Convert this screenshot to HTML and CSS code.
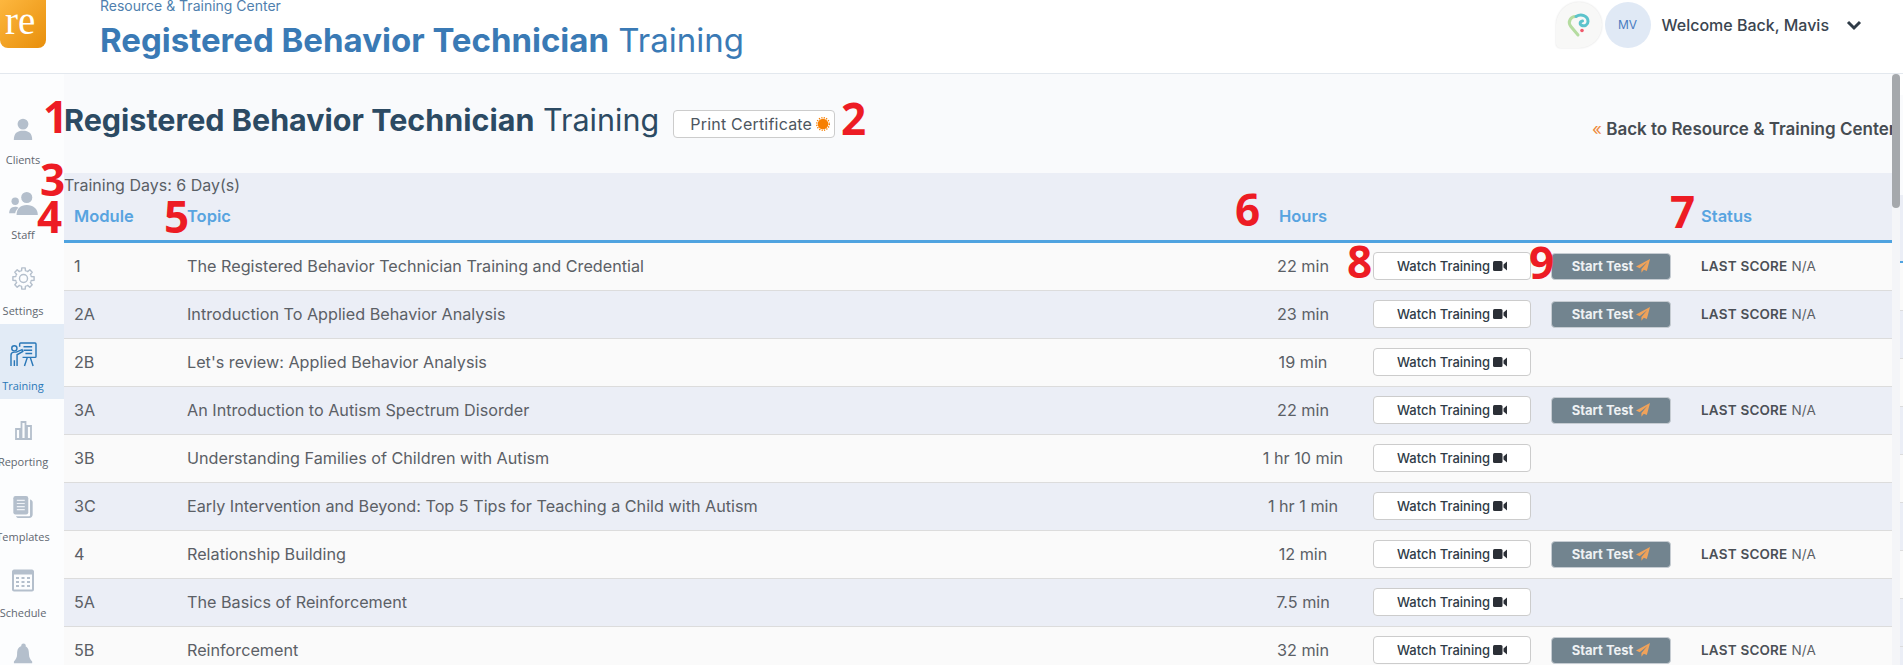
FILE: index.html
```html
<!DOCTYPE html>
<html lang="en">
<head>
    <meta charset="UTF-8">
    <title>Registered Behavior Technician Training</title>
    <link rel="stylesheet" href="styles.css">
</head>
<body>
<svg class="defs" width="0" height="0">
    <symbol id="cam" viewBox="0 0 14 10"><rect x="0" y="0" width="9.5" height="10" rx="1.5"/><path d="M10.5 3.6 14 .6v8.8l-3.5-3z"/></symbol>
    <symbol id="plane" viewBox="0 0 16 16"><path d="M16 0 0 8.6l4.2 1.9L13 3.4 6.2 11.4v4.2l2.7-3.4 3.5 1.6z"/></symbol>
    <path id="tooth" d="M8.79 4.24 9.97 3.85 10.25 .94H13.75L14.03 3.85 15.21 4.24"/>
</svg>
<header class="topbar">
    <div class="logo">re</div>
    <div class="head-titles">
        <div class="head-sub">Resource &amp; Training Center</div>
        <h1 class="head-title"><b>Registered Behavior Technician</b> Training</h1>
    </div>
    <div class="user">
        <div class="bubble">
            <svg width="26" height="26" viewBox="0 0 26 26" fill="none" stroke-width="3" stroke-linecap="round">
                <path d="M12 23 4.500 14C1.500 9.500 5 4 10 4.500" stroke="#b5dca0"/>
                <path d="M10 4.500C15 1.500 22 3.500 22 9.500c0 3.500-3.500 5-6 4-2.500-1-2.500-4 .5-4.500" stroke="#5cc3cc"/>
                <circle cx="16" cy="18.500" r="1.800" fill="#f0596b" stroke="none"/>
            </svg>
        </div>
        <div class="avatar">MV</div>
        <div class="welcome">Welcome Back, Mavis</div>
        <svg class="chev" width="16" height="11" viewBox="0 0 16 11" fill="none" stroke="#2f3b47" stroke-width="3"><path d="M2 2l6 6 6-6"/></svg>
    </div>
</header>
<div class="layout">
    <nav class="sidebar">
        <a class="nav-item">
            <svg width="20" height="23" viewBox="0 0 24 27"><circle cx="12" cy="7" r="6.500"/><path d="M1 26c0-8 4-11 11-11s11 3 11 11z"/></svg>
            <span>Clients</span>
        </a>
        <a class="nav-item">
            <svg width="29" height="24" viewBox="0 0 31 26"><circle cx="19" cy="6" r="6"/><circle cx="6.500" cy="10" r="4"/><path d="M8 25c0-7 4-11 11-11s12 4 12 11z"/><path d="M0 23c0-4 2-7 6.500-7 1.500 0 2.500.3 3.500 1-2 2-3.200 3.700-3.500 6z"/></svg>
            <span>Staff</span>
        </a>
        <a class="nav-item">
            <svg class="line up" width="23" height="23" viewBox="0 0 24 24" stroke="#b4bfcc" stroke-width="1.500" stroke-linejoin="round">
                <circle cx="12" cy="12" r="4.200"/>
                <use href="#tooth"/>
                <use href="#tooth" transform="rotate(45 12 12)"/>
                <use href="#tooth" transform="rotate(90 12 12)"/>
                <use href="#tooth" transform="rotate(135 12 12)"/>
                <use href="#tooth" transform="rotate(180 12 12)"/>
                <use href="#tooth" transform="rotate(225 12 12)"/>
                <use href="#tooth" transform="rotate(270 12 12)"/>
                <use href="#tooth" transform="rotate(315 12 12)"/>
            </svg>
            <span>Settings</span>
        </a>
        <a class="nav-item active">
            <svg class="line" width="29" height="25" viewBox="0 0 30 26" stroke="#2a78b8" stroke-width="1.500"><circle cx="5.500" cy="6.500" r="2.700"/><path d="M2 25V13.500c0-2 1.500-3 3.500-3h2l6-2.500.8 1.800-6 3.500V25M5.500 19v6"/><path d="M11 5V2c0-.6.400-1 1-1h15c.6 0 1 .4 1 1v13c0 .6-.4 1-1 1H14"/><path d="M15 5h9M15 8.500h9M17 12h7M19 16l-3 9M22 16l3 9"/></svg>
            <span>Training</span>
        </a>
        <a class="nav-item">
            <svg class="line up-more" width="17" height="19" viewBox="0 0 17 19" stroke="#b4bfcc" stroke-width="1.800"><path d="M1 8h4v10H1zM6.500 1h4v17h-4zM12 5h4v13h-4z"/></svg>
            <span>Reporting</span>
        </a>
        <a class="nav-item">
            <svg width="20" height="22" viewBox="0 0 22 25"><rect x="0" y="0" width="17" height="21" rx="2.500"/><path d="M19 4c1.500.300 3 1.500 3 3v14c0 2-1.500 4-4 4H6c-1.500 0-2.500-.7-3-2h15c.7 0 1-.3 1-1z"/><path d="M4 5h9M4 8.500h9M4 12h9M4 15.500h9" stroke="#eef1f6" stroke-width="1.300"/></svg>
            <span>Templates</span>
        </a>
        <a class="nav-item">
            <svg class="up" width="22" height="23" viewBox="0 0 22 22"><path d="M2 0h18c1 0 2 1 2 2v18c0 1-1 2-2 2H2c-1 0-2-1-2-2V2C0 1 1 0 2 0zm0 5v15h18V5z"/><path d="M4 7.500h3v2H4zM9.500 7.500h3v2h-3zM15 7.500h3v2h-3zM4 11.500h3v2H4zM9.500 11.500h3v2h-3zM15 11.500h3v2h-3zM4 15.500h3v2H4zM9.500 15.500h3v2h-3zM15 15.500h3v2h-3z"/></svg>
            <span>Schedule</span>
        </a>
        <a class="nav-item bell">
            <svg width="21" height="24" viewBox="0 0 23 26"><circle cx="11.500" cy="3" r="2.500"/><path d="M11.500 3C6 3 4.500 7 4.500 12c0 4-1.500 6-3.500 8v2h20v-2c-2-2-3.500-4-3.500-8 0-5-1.500-9-6.500-9z"/></svg>
        </a>
    </nav>
    <main class="content">
        <section class="page-head">
            <h2 class="page-title"><b>Registered Behavior Technician</b> Training</h2>
            <button class="print-btn">Print Certificate
                <svg width="14" height="14" viewBox="0 0 14 14"><circle cx="7" cy="7" r="5.300" fill="#f77f00"/><circle cx="7" cy="7" r="6.300" fill="none" stroke="#f77f00" stroke-width="1.400" stroke-dasharray="1.200 1.270"/></svg>
            </button>
            <a class="back-link"><i>«</i> Back to Resource &amp; Training Center</a>
        </section>
        <section class="list">
            <div class="days">Training Days: 6 Day(s)</div>
            <table class="modules">
                <thead>
                    <tr>
                        <th class="c-mod">Module</th>
                        <th class="c-topic">Topic</th>
                        <th class="c-hours">Hours</th>
                        <th class="c-watch"></th>
                        <th class="c-test"></th>
                        <th class="c-status">Status</th>
                    </tr>
                </thead>
                <tbody>
                    <tr>
                        <td>1</td><td>The Registered Behavior Technician Training and Credential</td><td class="hrs">22 min</td>
                        <td><button class="watch">Watch Training <svg width="14" height="10"><use href="#cam"/></svg></button></td>
                        <td><button class="test">Start Test <svg width="14" height="14"><use href="#plane"/></svg></button></td>
                        <td class="score"><b>LAST SCORE</b> N/A</td>
                    </tr>
                    <tr>
                        <td>2A</td><td>Introduction To Applied Behavior Analysis</td><td class="hrs">23 min</td>
                        <td><button class="watch">Watch Training <svg width="14" height="10"><use href="#cam"/></svg></button></td>
                        <td><button class="test">Start Test <svg width="14" height="14"><use href="#plane"/></svg></button></td>
                        <td class="score"><b>LAST SCORE</b> N/A</td>
                    </tr>
                    <tr>
                        <td>2B</td><td>Let's review: Applied Behavior Analysis</td><td class="hrs">19 min</td>
                        <td><button class="watch">Watch Training <svg width="14" height="10"><use href="#cam"/></svg></button></td>
                        <td></td><td></td>
                    </tr>
                    <tr>
                        <td>3A</td><td>An Introduction to Autism Spectrum Disorder</td><td class="hrs">22 min</td>
                        <td><button class="watch">Watch Training <svg width="14" height="10"><use href="#cam"/></svg></button></td>
                        <td><button class="test">Start Test <svg width="14" height="14"><use href="#plane"/></svg></button></td>
                        <td class="score"><b>LAST SCORE</b> N/A</td>
                    </tr>
                    <tr>
                        <td>3B</td><td>Understanding Families of Children with Autism</td><td class="hrs">1 hr 10 min</td>
                        <td><button class="watch">Watch Training <svg width="14" height="10"><use href="#cam"/></svg></button></td>
                        <td></td><td></td>
                    </tr>
                    <tr>
                        <td>3C</td><td>Early Intervention and Beyond: Top 5 Tips for Teaching a Child with Autism</td><td class="hrs">1 hr 1 min</td>
                        <td><button class="watch">Watch Training <svg width="14" height="10"><use href="#cam"/></svg></button></td>
                        <td></td><td></td>
                    </tr>
                    <tr>
                        <td>4</td><td>Relationship Building</td><td class="hrs">12 min</td>
                        <td><button class="watch">Watch Training <svg width="14" height="10"><use href="#cam"/></svg></button></td>
                        <td><button class="test">Start Test <svg width="14" height="14"><use href="#plane"/></svg></button></td>
                        <td class="score"><b>LAST SCORE</b> N/A</td>
                    </tr>
                    <tr>
                        <td>5A</td><td>The Basics of Reinforcement</td><td class="hrs">7.5 min</td>
                        <td><button class="watch">Watch Training <svg width="14" height="10"><use href="#cam"/></svg></button></td>
                        <td></td><td></td>
                    </tr>
                    <tr>
                        <td>5B</td><td>Reinforcement</td><td class="hrs">32 min</td>
                        <td><button class="watch">Watch Training <svg width="14" height="10"><use href="#cam"/></svg></button></td>
                        <td><button class="test">Start Test <svg width="14" height="14"><use href="#plane"/></svg></button></td>
                        <td class="score"><b>LAST SCORE</b> N/A</td>
                    </tr>
                </tbody>
            </table>
        </section>
    </main>
    <div class="scrollbar"><div class="thumb"></div></div>
    <div class="strip">
        <div class="strip-top"></div>
        <div class="strip-head"></div>
        <div class="strip-row"></div>
        <div class="strip-row even"></div>
        <div class="strip-row"></div>
        <div class="strip-row even"></div>
        <div class="strip-row"></div>
        <div class="strip-row even"></div>
        <div class="strip-row"></div>
        <div class="strip-row even"></div>
    </div>
</div>
<!-- red callout numbers drawn over the screenshot -->
<span class="mark m1">1</span>
<span class="mark m2">2</span>
<span class="mark m3">3</span>
<span class="mark m4">4</span>
<span class="mark m5">5</span>
<span class="mark m6">6</span>
<span class="mark m7">7</span>
<span class="mark m8">8</span>
<span class="mark m9">9</span>
</body>
</html>
```

FILE: styles.css
```css
*{
    margin: 0;
    padding: 0;
    box-sizing: border-box;
}
html,body{
    width: 100%;
    height: 100%;
    overflow: hidden;
}
body{
    position: relative;
    background-color: #fff;
    font-family: Inter, "Open Sans", sans-serif;
    color: #555;
}
.defs{
    position: absolute;
}
button{
    font-family: inherit;
}

/* top bar */
.topbar{
    height: 74px;
    display: flex;
    border-bottom: 1px solid #e3e8ee;
    background-color: #fff;
}
.logo{
    width: 46px;
    height: 48px;
    margin-right: 54px;
    padding: 0 0 0 5px;
    border-radius: 0 0 8px 8px;
    background: linear-gradient(135deg, #fdb73f, #e88f0b);
    color: #fff;
    font-family: "Liberation Serif", serif;
    font-size: 39px;
    line-height: 42px;
}
.head-sub{
    font-size: 14px;
    line-height: 12px;
    color: #4f7fae;
}
.head-title{
    margin-top: 8px;
    font-size: 33px;
    line-height: 40px;
    font-weight: 400;
    color: #3a7ab5;
    white-space: nowrap;
}
.head-title b,.page-title b{
    font-weight: 700;
}
.user{
    margin-left: auto;
    margin-right: 41px;
    height: 50px;
    display: flex;
    align-items: center;
    padding-left: 2px;
}
.bubble{
    width: 46px;
    height: 46px;
    margin-right: 3px;
    border-radius: 50% 50% 50% 10%;
    background-color: #f8f8f7;
    box-shadow: 0 0 2px #ddd;
    display: flex;
    align-items: center;
    justify-content: center;
}
.avatar{
    width: 46px;
    height: 46px;
    border-radius: 50%;
    background-color: #e0e9f5;
    color: #4a7cc0;
    font-size: 12px;
    line-height: 46px;
    text-align: center;
}
.welcome{
    margin-left: 11px;
    font-size: 16px;
    font-weight: 500;
    color: #3a4550;
    white-space: nowrap;
}
.chev{
    margin-left: 17px;
}

/* page body */
.layout{
    display: flex;
    height: 591px;
}
.sidebar{
    width: 64px;
    flex: none;
    padding-top: 23px;
    background-color: #fcfdfe;
    overflow: hidden;
}
.nav-item{
    height: 75.500px;
    display: flex;
    flex-direction: column;
    align-items: center;
    justify-content: flex-end;
    padding-right: 18px;
    padding-bottom: 5px;
    font-family: "Open Sans", sans-serif;
    font-size: 11px;
    line-height: 17px;
    color: #5f6770;
    white-space: nowrap;
}
.nav-item svg{
    fill: #b4bfcc;
    margin-bottom: 10px;
}
.nav-item svg.line{
    fill: none;
}
.nav-item svg.up{
    margin-bottom: 12px;
}
.nav-item svg.up-more{
    margin-bottom: 13px;
}
.nav-item.active{
    background-color: #e2ebf6;
    color: #2a78b8;
}
.nav-item.bell{
    justify-content: flex-start;
    padding-top: 17px;
}
.content{
    width: 1828px;
    flex: none;
    overflow: hidden;
}
.page-head{
    height: 99px;
    display: flex;
    align-items: flex-start;
    background-color: #f9fafc;
    white-space: nowrap;
}
.page-title{
    margin-top: 28px;
    font-size: 30.500px;
    line-height: 36px;
    font-weight: 400;
    color: #2c4a63;
}
.print-btn{
    width: 162px;
    height: 28px;
    margin: 36px 0 0 14px;
    border: 1px solid #ccc;
    border-radius: 4px;
    background-color: #fff;
    color: #4d5660;
    font-size: 16px;
    letter-spacing: .2px;
    display: flex;
    align-items: center;
    justify-content: flex-end;
    gap: 4px;
    padding-right: 4px;
}
.back-link{
    margin: 45px 0 0 auto;
    width: 300px;
    font-size: 17px;
    line-height: 20px;
    font-weight: 600;
    color: #464c52;
    overflow: hidden;
}
.back-link i{
    font-style: normal;
    font-weight: 400;
    color: #ee8a3c;
}
.list{
    background-color: #ebeef6;
}
.days{
    height: 19px;
    padding-top: 3px;
    font-size: 16px;
    line-height: 18px;
    color: #5a5f66;
}
.modules{
    width: 100%;
    table-layout: fixed;
    border-collapse: collapse;
}
.modules th{
    height: 49px;
    padding-top: 1px;
    text-align: left;
    font-size: 16.500px;
    font-weight: 600;
    color: #58a4e0;
    border-bottom: 3px solid #4fa3e0;
}
.c-mod{
    width: 123px;
    padding-left: 10px;
}
.c-topic{
    width: 1062px;
}
.c-hours{
    width: 124px;
}
.modules .c-hours{
    text-align: center;
    padding-right: 16px;
}
.c-watch{
    width: 178px;
}
.c-test{
    width: 150px;
}
.modules td{
    height: 48px;
    font-size: 16.200px;
    color: #5b6066;
    border-bottom: 1px solid #dcdcdc;
    white-space: nowrap;
}
.modules tbody tr:first-child td{
    height: 49px;
}
.modules td:first-child{
    padding-left: 10px;
}
.modules tbody tr:nth-child(odd){
    background-color: #fafafa;
}
.modules .hrs{
    text-align: center;
    padding-right: 16px;
}
.watch{
    width: 158px;
    height: 28px;
    display: flex;
    align-items: center;
    justify-content: center;
    gap: 3px;
    border: 1px solid #ccc;
    border-radius: 4px;
    background-color: #fff;
    color: #2f3b47;
    font-size: 13px;
    font-weight: 500;
}
.watch svg{
    fill: #2b2f36;
}
.test{
    width: 120px;
    height: 27px;
    display: flex;
    align-items: center;
    justify-content: center;
    gap: 3px;
    border: 1px solid #c6ccd2;
    border-radius: 4px;
    background-color: #72848f;
    color: #eef1f3;
    font-size: 13px;
    font-weight: 700;
}
.test svg{
    fill: #f0a25a;
}
.modules .score{
    font-size: 13.500px;
    letter-spacing: .2px;
    color: #5b6066;
}
.score b{
    font-weight: 600;
    color: #4b5056;
}
.scrollbar{
    width: 8px;
    flex: none;
    background-color: #f4f5f8;
}
.thumb{
    height: 134px;
    border-radius: 4px;
    background-color: #a5a8ac;
}
.strip{
    width: 3px;
    flex: none;
    background-color: #ebeef6;
}
.strip-top{
    height: 121px;
    background-color: #fafbfd;
    border-top: 21px solid #fff;
}
.strip-head{
    height: 68px;
    border-bottom: 2px solid #4fa3e0;
}
.strip-row{
    height: 48px;
    background-color: #fafafa;
    border-bottom: 1px solid #dcdcdc;
}
.strip-row.even{
    background-color: #ebeef6;
}

/* red callouts */
.mark{
    position: absolute;
    font-family: "Open Sans", sans-serif;
    font-size: 44px;
    line-height: 44px;
    font-weight: 700;
    color: #ed1c24;
}
.m1{ left: 43px; top: 94px; }
.m2{ left: 841px; top: 96px; }
.m3{ left: 40px; top: 157px; }
.m4{ left: 37px; top: 194px; }
.m5{ left: 164px; top: 194px; }
.m6{ left: 1235px; top: 187px; }
.m7{ left: 1670px; top: 189px; }
.m8{ left: 1347px; top: 239px; }
.m9{ left: 1529px; top: 240px; }
```
